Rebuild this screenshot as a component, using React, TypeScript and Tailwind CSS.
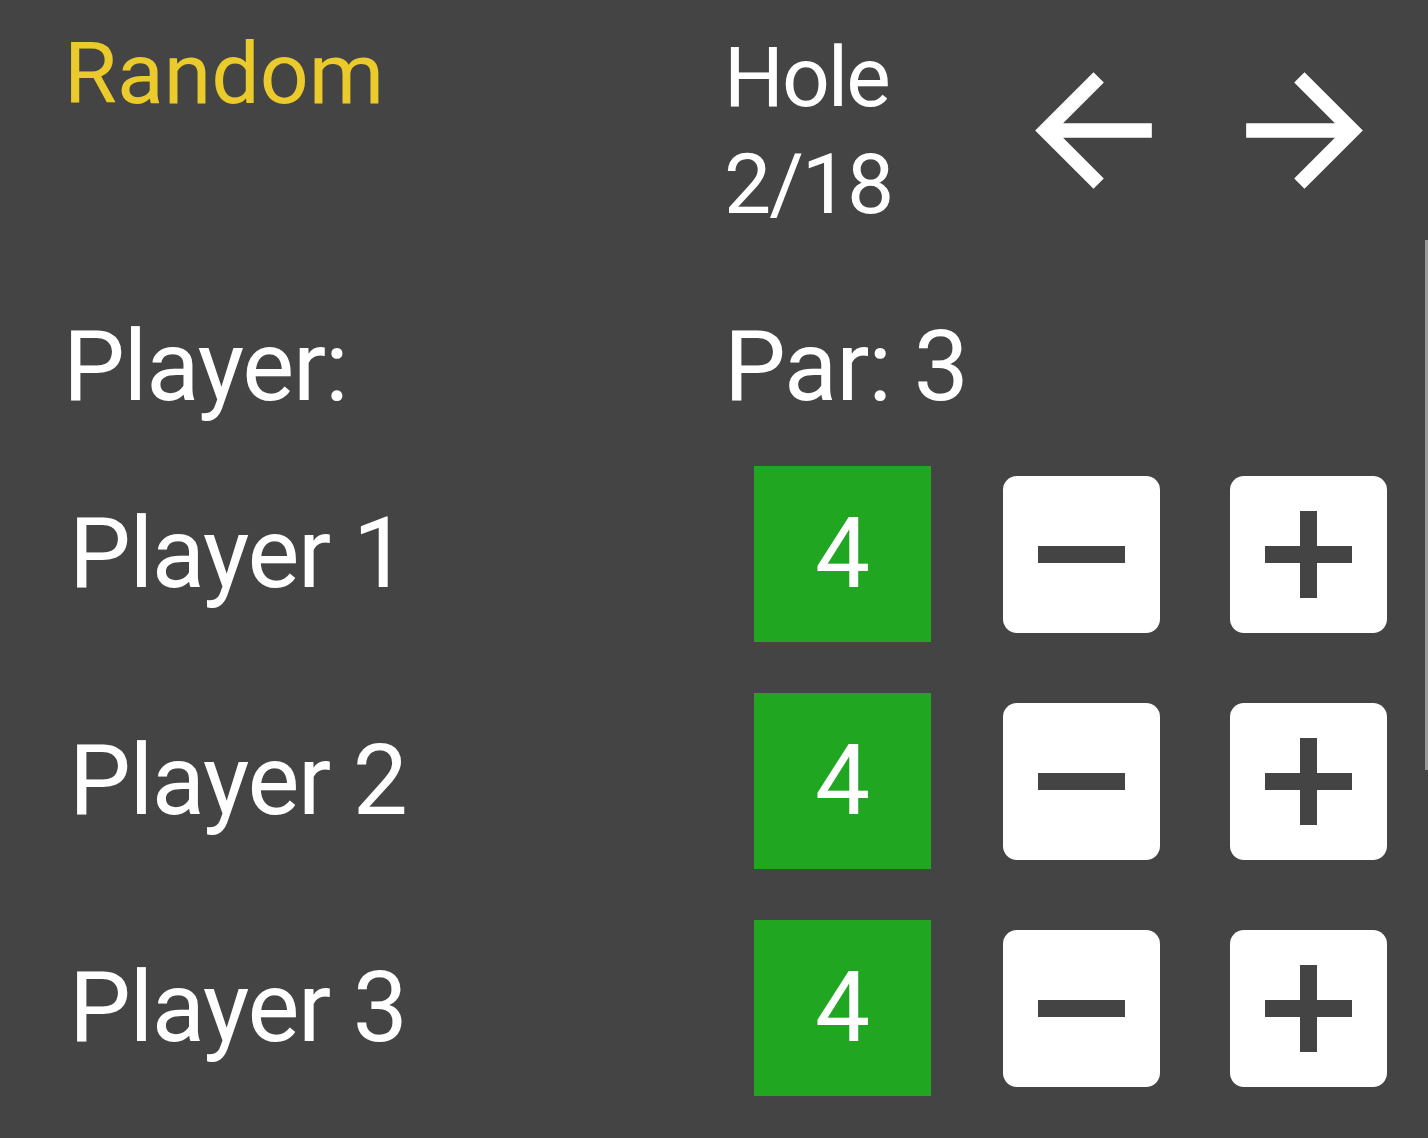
import React from "react";

const players = [
  { name: "Player 1", score: 4 },
  { name: "Player 2", score: 4 },
  { name: "Player 3", score: 4 },
];

function ArrowBack() {
  return (
    <svg width="175" height="175" viewBox="0 0 24 24" fill="#ffffff">
      <path d="M20 11H7.83l5.59-5.59L12 4l-8 8 8 8 1.41-1.41L7.83 13H20v-2z" />
    </svg>
  );
}

function ArrowForward() {
  return (
    <svg width="175" height="175" viewBox="0 0 24 24" fill="#ffffff">
      <path d="M12 4l-1.41 1.41L16.17 11H4v2h12.17l-5.58 5.59L12 20l8-8z" />
    </svg>
  );
}

function MinusIcon() {
  return (
    <svg width="87" height="87" viewBox="0 0 87 87">
      <rect x="0" y="35" width="87" height="17" fill="#444444" />
    </svg>
  );
}

function PlusIcon() {
  return (
    <svg width="87" height="87" viewBox="0 0 87 87">
      <rect x="0" y="35" width="87" height="17" fill="#444444" />
      <rect x="35" y="0" width="17" height="87" fill="#444444" />
    </svg>
  );
}

export default function App() {
  return (
    <div className="relative w-[1428px] h-[1138px] overflow-hidden bg-[#444444] text-white font-['Roboto',sans-serif]">
      {/* header */}
      <div className="flex items-start pt-[20px]">
        <div className="w-[724px] pl-[64px] text-[86px] leading-[108px] text-[#ebcb2c]">
          Random
        </div>
        <div className="w-[282px] mt-[4px] text-[84px] leading-[107px] tracking-[-2px]">
          <div>Hole</div>
          <div>2/18</div>
        </div>
        <button className="mt-[23px]">
          <ArrowBack />
        </button>
        <button className="mt-[23px] ml-[36px]">
          <ArrowForward />
        </button>
      </div>

      {/* labels */}
      <div className="flex mt-[70px] text-[98px] leading-[118px] tracking-[-1.2px]">
        <div className="w-[724px] pl-[63px]">Player:</div>
        <div>Par: 3</div>
      </div>

      {/* players */}
      <div className="flex flex-col gap-[51px] mt-[40px]">
        {players.map((p) => (
          <div key={p.name} className="flex items-center h-[176px]">
            <div className="w-[754px] pl-[69px] text-[98px] leading-[118px] tracking-[-1.4px]">
              {p.name}
            </div>
            <div className="flex items-center justify-center w-[177px] h-[176px] bg-[#21a621] text-[98px] leading-none">
              {p.score}
            </div>
            <button className="flex items-center justify-center ml-[72px] w-[157px] h-[157px] rounded-[14px] bg-white">
              <MinusIcon />
            </button>
            <button className="flex items-center justify-center ml-[70px] w-[157px] h-[157px] rounded-[14px] bg-white">
              <PlusIcon />
            </button>
          </div>
        ))}
      </div>

      {/* scrollbar */}
      <div className="absolute right-0 top-[240px] w-[3px] h-[530px] bg-[#9a9a9a]" />
    </div>
  );
}
